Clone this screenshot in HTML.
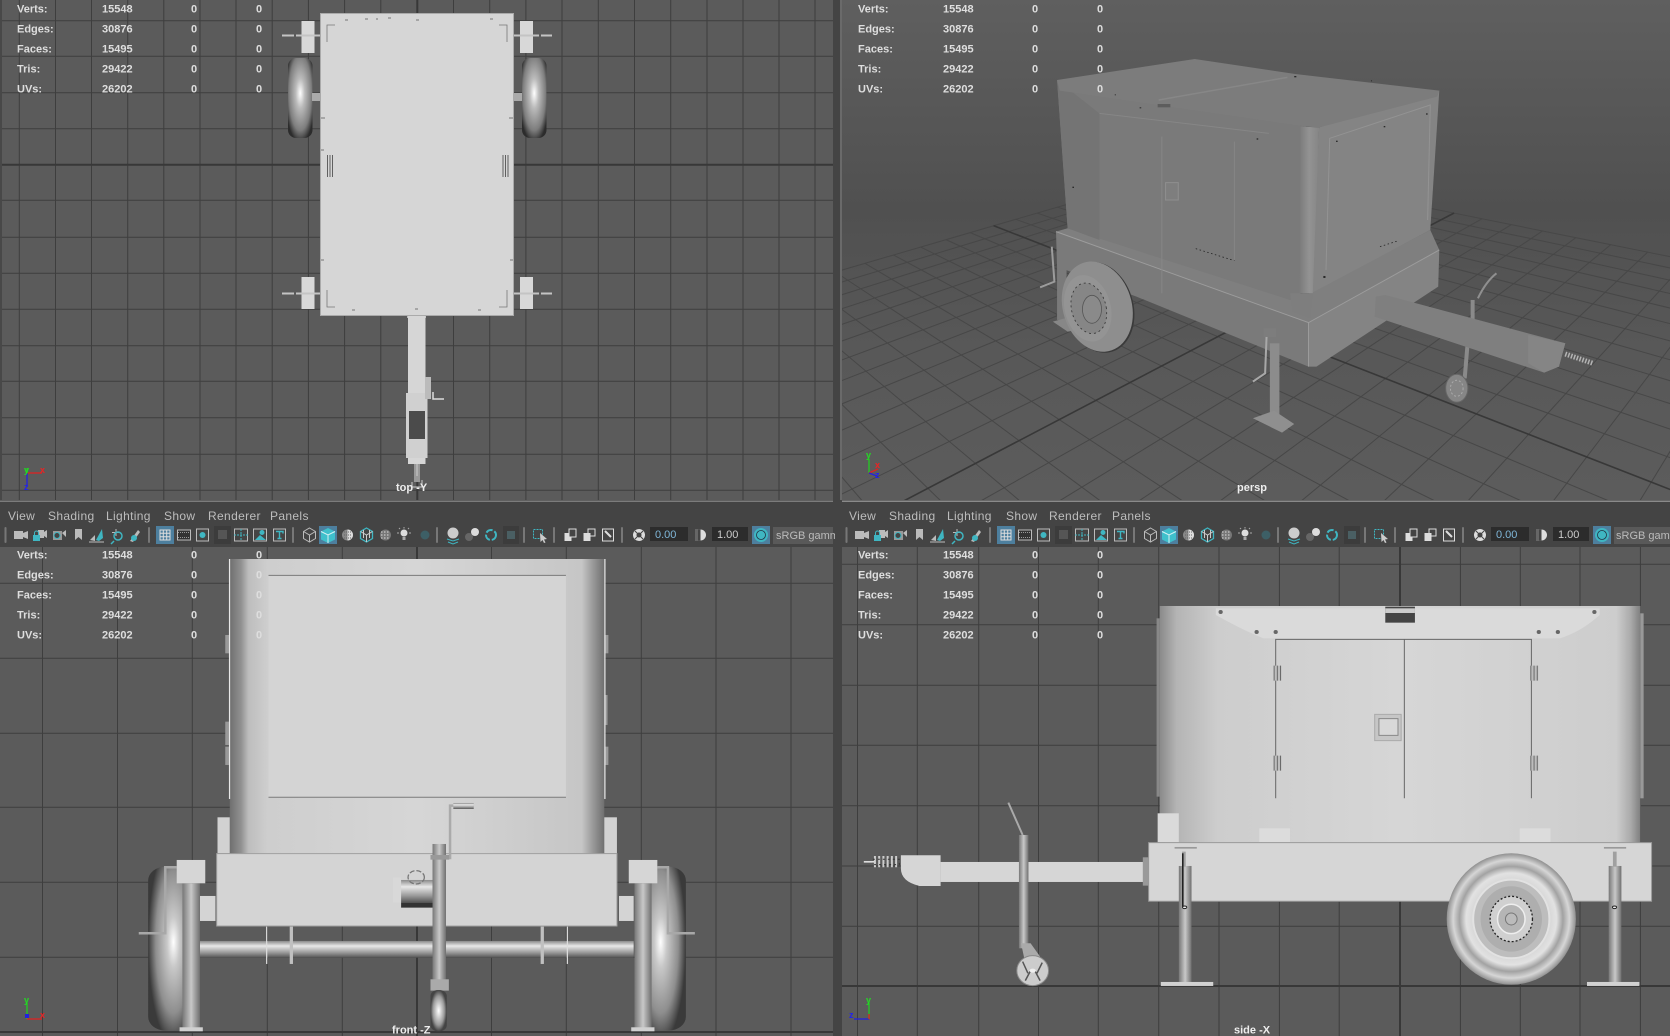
<!DOCTYPE html>
<html><head><meta charset="utf-8"><title>Viewports</title>
<style>
html,body{margin:0;padding:0;background:#444;width:1670px;height:1036px;overflow:hidden}
svg{display:block}
text{font-family:"Liberation Sans",sans-serif}
.s{font-size:11px;font-weight:bold;fill:#dedede}
.m{font-size:12px;fill:#bdbdbd;letter-spacing:.35px}
.l{font-size:11px;font-weight:bold;fill:#eee}
.n{font-size:11px}
.g{fill:none;vector-effect:non-scaling-stroke}
.g *{vector-effect:non-scaling-stroke}
line,path,rect,polygon,polyline,ellipse,circle{vector-effect:non-scaling-stroke}
</style></head><body>
<svg width="1670" height="1036" viewBox="0 0 1670 1036" xmlns="http://www.w3.org/2000/svg">
<defs>
<clipPath id="c1"><rect x="0" y="0" width="833" height="500"/></clipPath>
<clipPath id="c2"><rect x="842" y="0" width="828" height="500"/></clipPath>
<clipPath id="c3"><rect x="0" y="547" width="833" height="489"/></clipPath>
<clipPath id="c4"><rect x="842" y="547" width="828" height="489"/></clipPath>
<clipPath id="t1"><rect x="771" y="520" width="64" height="24"/></clipPath>
<clipPath id="t2"><rect x="1611" y="520" width="59" height="24"/></clipPath>
<linearGradient id="bgp" x1="0" y1="0" x2="0" y2="1"><stop offset="0" stop-color="#5f5f5f"/><stop offset=".42" stop-color="#505050"/><stop offset=".7" stop-color="#585858"/><stop offset="1" stop-color="#5c5c5c"/></linearGradient>
<linearGradient id="fb"><stop offset="0" stop-color="#6f6f6f"/><stop offset=".03" stop-color="#909090"/><stop offset=".05" stop-color="#bdbdbd"/><stop offset=".1" stop-color="#cecece"/><stop offset=".5" stop-color="#d6d6d6"/><stop offset=".94" stop-color="#c6c6c6"/><stop offset=".97" stop-color="#999"/><stop offset="1" stop-color="#6f6f6f"/></linearGradient>
<linearGradient id="sb"><stop offset="0" stop-color="#8a8a8a"/><stop offset=".035" stop-color="#b4b4b4"/><stop offset=".12" stop-color="#cdcdcd"/><stop offset=".5" stop-color="#d6d6d6"/><stop offset=".95" stop-color="#cdcdcd"/><stop offset=".98" stop-color="#aaa"/><stop offset="1" stop-color="#7f7f7f"/></linearGradient>
<radialGradient id="tw" cx=".5" cy=".44" r=".62"><stop offset="0" stop-color="#fff"/><stop offset=".3" stop-color="#bbb"/><stop offset=".75" stop-color="#7d7d7d"/><stop offset="1" stop-color="#2c2c2c"/></radialGradient>
<radialGradient id="ftl" cx=".62" cy=".46" r=".62"><stop offset="0" stop-color="#fff"/><stop offset=".25" stop-color="#c8c8c8"/><stop offset=".7" stop-color="#8e8e8e"/><stop offset="1" stop-color="#3a3a3a"/></radialGradient>
<radialGradient id="ftr" cx=".38" cy=".46" r=".62"><stop offset="0" stop-color="#fff"/><stop offset=".25" stop-color="#c8c8c8"/><stop offset=".7" stop-color="#8e8e8e"/><stop offset="1" stop-color="#3a3a3a"/></radialGradient>
<linearGradient id="post"><stop offset="0" stop-color="#777"/><stop offset=".5" stop-color="#c8c8c8"/><stop offset="1" stop-color="#6f6f6f"/></linearGradient>
<linearGradient id="axle" x1="0" y1="0" x2="0" y2="1"><stop offset="0" stop-color="#8a8a8a"/><stop offset=".3" stop-color="#e8e8e8"/><stop offset=".7" stop-color="#999"/><stop offset="1" stop-color="#555"/></linearGradient>
<linearGradient id="cnr"><stop offset="0" stop-color="#7b7b7b"/><stop offset=".5" stop-color="#939393"/><stop offset="1" stop-color="#858585"/></linearGradient>
<radialGradient id="sw"><stop offset=".58" stop-color="#d6d6d6"/><stop offset=".7" stop-color="#e2e2e2"/><stop offset=".8" stop-color="#a2a2a2"/><stop offset=".9" stop-color="#d6d6d6"/><stop offset="1" stop-color="#909090"/></radialGradient>
<radialGradient id="jw"><stop offset="0" stop-color="#fff"/><stop offset=".7" stop-color="#999"/><stop offset="1" stop-color="#444"/></radialGradient>
<g id="tb">
<g fill="#777"><rect x="4.500" y="527" width="2" height="16" rx="1"/><rect x="148" y="527" width="2" height="16" rx="1"/><rect x="292" y="527" width="2" height="16" rx="1"/><rect x="436" y="527" width="2" height="16" rx="1"/><rect x="523" y="527" width="2" height="16" rx="1"/><rect x="553" y="527" width="2" height="16" rx="1"/><rect x="621" y="527" width="2" height="16" rx="1"/></g>
<rect x="14" y="531" width="9" height="8" fill="#bbb"/><path d="M23 533l5-2v8l-5-2z" fill="#bbb"/>
<rect x="38" y="530" width="6" height="8" fill="#bbb"/><path d="M44 532l3-2v8l-3-2z" fill="#bbb"/><rect x="33" y="535" width="7" height="6" fill="#3fb6c2"/><path d="M34.500 535v-2a2 2 0 0 1 4 0v2" stroke="#3fb6c2" fill="none"/>
<rect x="53" y="531" width="9" height="9" fill="#999"/><circle cx="57" cy="535.500" r="3" fill="#444" stroke="#3fb6c2"/><path d="M62 533l4-3v7z" fill="#bbb"/>
<path d="M75 529h7v11l-3.500-3-3.500 3z" fill="#bbb"/>
<path d="M96 540l6-11 1 9-4 3z" fill="#3fb6c2"/><path d="M89 542h15" stroke="#bbb"/><path d="M90 540l5-5v6z" fill="#bbb"/>
<path d="M116 529v7M112 532.500h8" stroke="#bbb"/><circle cx="118" cy="536" r="4" fill="none" stroke="#3fb6c2" stroke-width="1.500"/><path d="M114 541l-3 3" stroke="#3fb6c2" stroke-width="1.500"/>
<path d="M130 541l8-11 2 2-7 10z" fill="#bbb"/><circle cx="134" cy="538" r="3" fill="#3fb6c2"/>
<rect x="156" y="526" width="18" height="18" fill="#4d7f9e"/><path d="M160 530h10v10h-10zM163.300 530v10M166.700 530v10M160 533.300h10M160 536.700h10" stroke="#ddd" fill="none"/>
<rect x="177.500" y="530" width="13" height="10" fill="#333" stroke="#bbb"/><path d="M178 532.500h12M178 537.500h12" stroke="#999" stroke-dasharray="1 1"/>
<rect x="196.500" y="529" width="12" height="12" fill="none" stroke="#bbb"/><circle cx="202.500" cy="535" r="3" fill="#3fb6c2"/>
<rect x="214" y="526" width="17" height="18" fill="#3c3c3c"/><rect x="218" y="530" width="9" height="9" fill="#555"/>
<rect x="234.500" y="529" width="13" height="12" fill="none" stroke="#bbb"/><path d="M241 529v12M234 535h14" stroke="#3fb6c2" stroke-dasharray="2 1"/>
<rect x="253.500" y="529" width="13" height="12" fill="none" stroke="#bbb"/><circle cx="262" cy="532.500" r="2.500" fill="#3fb6c2"/><path d="M255 540l5-5 6 5z" fill="#3fb6c2"/>
<rect x="273.500" y="529" width="12" height="12" fill="none" stroke="#bbb"/><path d="M276 531.500h7v2M279.500 531.500v7M277.500 538.500h4" stroke="#3fb6c2" fill="none" stroke-width="1.400"/>
<path d="M309.500 528l6 3.500v7l-6 3.500-6-3.500v-7zM303.500 531.500l6 3.500 6-3.500M309.500 535v7" stroke="#bbb" fill="none"/>
<rect x="319" y="526" width="18" height="18" fill="#4d7f9e"/><path d="M328 528l7 3.500v8l-7 3.500-7-3.500v-8z" fill="#3fc0cc"/><path d="M321 531.500l7 3.500 7-3.500M328 535v8" stroke="#d6f0f4" fill="none"/>
<circle cx="347.500" cy="535" r="5.500" fill="#888"/><path d="M347.500 529.500a5.500 5.500 0 0 1 0 11z" fill="#ddd"/><path d="M344 532h7M344 535h7M344 538h7" stroke="#666" stroke-dasharray="1 1"/>
<path d="M366.500 528l6 3.500v7l-6 3.500-6-3.500v-7z" fill="none" stroke="#3fb6c2" stroke-width="1.300"/><path d="M360.500 531.500l6 3.500 6-3.500M366.500 535v7M363.500 530v8M369.500 530v8" stroke="#ccc" fill="none"/>
<circle cx="385.500" cy="535" r="5.500" fill="#777"/><path d="M381 532h9M381 535h9M381 538h9" stroke="#ddd" stroke-dasharray="1.500 1.500"/>
<circle cx="404" cy="533" r="3.500" fill="#ddd"/><rect x="402.500" y="537" width="3" height="3" fill="#aaa"/><path d="M397 533h2M409 533h2M404 527v1.500M399 528l1 1M409 528l-1 1" stroke="#aaa"/>
<circle cx="425" cy="535" r="4.500" fill="#3d5f66"/>
<circle cx="453" cy="533" r="5.500" fill="#ccc"/><path d="M447 539l6 2 6-2M448 542l5 2 5-2" stroke="#3fb6c2" fill="none"/>
<circle cx="469" cy="537" r="4" fill="#666"/><circle cx="475" cy="532" r="4" fill="#ddd"/>
<circle cx="491" cy="535" r="5" fill="none" stroke="#3fb6c2" stroke-width="2" stroke-dasharray="7 2"/>
<rect x="503" y="526" width="16" height="18" fill="#3c3c3c"/><rect x="507" y="531" width="8" height="8" fill="#4a5f63"/>
<rect x="533.500" y="529.500" width="9" height="9" fill="none" stroke="#3fb6c2" stroke-dasharray="2 1"/><path d="M540 533l7 6-3 .5 1.500 3-1.500.5-1.500-3-2 2z" fill="#ccc"/>
<rect x="564.500" y="533" width="7" height="8" fill="#ddd"/><rect x="569" y="529" width="7" height="8" fill="#444" stroke="#ddd"/>
<rect x="583.500" y="533" width="7" height="8" fill="#ddd"/><rect x="588" y="529" width="7" height="7" fill="none" stroke="#ddd"/>
<rect x="602.500" y="529" width="11" height="12" fill="none" stroke="#ddd"/><path d="M605 531l6 6" stroke="#ddd" stroke-width="2"/>
<circle cx="639" cy="535" r="6" fill="#ddd"/><circle cx="639" cy="535" r="2.500" fill="#444"/><path d="M635 531l3 3M643 531l-3 3M635 539l3-3M643 539l-3-3" stroke="#444"/>
<rect x="650" y="527" width="38" height="14" fill="#2c2c2c"/>
<circle cx="700.500" cy="535" r="5.500" fill="#ddd"/><path d="M700.500 529.500a5.500 5.500 0 0 0 0 11z" fill="#444"/><rect x="695" y="529" width="3" height="12" fill="#666"/>
<rect x="712" y="527" width="36" height="14" fill="#2c2c2c"/>
<rect x="752" y="526" width="18" height="18" fill="#4d7f9e"/><circle cx="761" cy="535" r="7" fill="#3fb6c2"/><circle cx="761" cy="535" r="4.500" fill="none" stroke="#234" stroke-width=".8"/>
</g>
</defs>

<!-- base -->
<rect width="1670" height="1036" fill="#444"/>

<!-- TOP VIEW -->
<g clip-path="url(#c1)">
<rect x="0" y="0" width="833" height="500" fill="#5b5b5b"/>
<path class="g" stroke="#3e3e3e" d="M19.300 0V500M55.500 0V500M91.500 0V500M127.700 0V500M163.800 0V500M200 0V500M236 0V500M272.200 0V500M308.400 0V500M344.600 0V500M380.800 0V500M453.500 0V500M489.700 0V500M525.900 0V500M562 0V500M598.300 0V500M634.500 0V500M670.700 0V500M707 0V500M743 0V500M779 0V500M815 0V500M0 20.700H833M0 56.300H833M0 92.700H833M0 128.700H833M0 200.300H833M0 237.300H833M0 273.300H833M0 309.300H833M0 345.700H833M0 381.300H833M0 417.700H833M0 454.300H833M0 490.300H833"/>
<path class="g" stroke="#383838" stroke-width="2" d="M0 164.700H833M417.300 0V500"/>
<!-- wheels -->
<rect x="288" y="58" width="24.500" height="80" rx="8" fill="url(#tw)"/>
<rect x="522" y="58" width="24.500" height="80" rx="8" fill="url(#tw)"/>
<rect x="312" y="93" width="9" height="8" fill="#aaa"/><rect x="513" y="93" width="9" height="8" fill="#aaa"/>
<!-- tabs -->
<g fill="#d8d8d8">
<rect x="301.500" y="21" width="13" height="32"/><rect x="520" y="21" width="13" height="32"/><rect x="301.500" y="277" width="13" height="32"/><rect x="520" y="277" width="13" height="32"/>
</g>
<g fill="#c4c4c4">
<rect x="282" y="34.500" width="12" height="2"/><rect x="296" y="34.500" width="24" height="2"/><rect x="513" y="34.500" width="26" height="2"/><rect x="541" y="34.500" width="11" height="2"/><rect x="282" y="292.500" width="12" height="2"/><rect x="296" y="292.500" width="24" height="2"/><rect x="513" y="292.500" width="26" height="2"/><rect x="541" y="292.500" width="11" height="2"/>
</g>
<!-- tongue -->
<rect x="407" y="315" width="19" height="3" fill="#bbb"/>
<rect x="408" y="316" width="17.500" height="148" fill="#d6d6d6"/>
<rect x="406" y="393" width="21.500" height="65" fill="#d0d0d0"/>
<rect x="409" y="411" width="16" height="28" fill="#4b4b4b"/>
<rect x="425" y="377" width="6" height="22" fill="#bbb"/>
<path d="M433 392v7h11" stroke="#ddd" stroke-width="1.500" fill="none"/>
<rect x="414" y="464" width="6" height="18" fill="#999"/>
<path d="M412 482v5h10v-7M417 464v12" stroke="#ccc" fill="none"/>
<!-- deck -->
<rect x="320.500" y="13.500" width="193" height="302" fill="#d6d6d6" stroke="#aaa"/>
<path class="g" stroke="#777" stroke-width=".8" d="M327 42V25h8M507 42V25h-8M327 290v17h8M507 290v17h-8"/>
<path class="g" stroke="#444" stroke-width=".8" d="M327.500 155v22M330 155v22M332.500 155v22M503 155v22M505.500 155v22M508 155v22"/>
<path class="g" stroke="#555" stroke-width=".8" d="M345 20h3M365 19h3M376 19h2M388 18h3M416 20h3M490 19h3M352 310h3M415 309h3M478 310h3M321 118h4M509 118h4M321 150h3M321 260h3M510 260h3"/>
<!-- text label -->
<text class="l" x="396" y="491">top -Y</text>
<!-- gizmo -->
<path d="M27 473h15" stroke="#d22" stroke-width="1.300"/><path d="M27 473v-5" stroke="#2c2" stroke-width="1.300"/><path d="M27 473v14" stroke="#22d" stroke-width="1.300"/>
<text x="24" y="473" font-size="9" font-weight="bold" fill="#2d2">y</text><text x="40" y="473" font-size="9" font-weight="bold" fill="#e22">x</text><text x="24" y="490" font-size="9" font-weight="bold" fill="#22e">z</text>
</g>

<!-- PERSP VIEW -->
<g clip-path="url(#c2)">
<rect x="842" y="0" width="828" height="500" fill="url(#bgp)"/>
<g transform="translate(840,0) scale(.5294,.3333)">
<path class="g" stroke="#474747" d="M0 1425L46 1510M0 1208L195 1510M0 1048L345 1510M0 924L498 1510M-9 816L654 1510M47 790L811 1510M101 765L971 1510M152 741L1133 1510M200 719L1297 1510M246 698L1463 1510M332 658L1580 1380M372 639L1580 1294M410 621L1580 1217M447 604L1580 1148M482 588L1580 1085M516 572L1580 1028M549 557L1580 976M580 543L1580 929M610 529L1580 885M639 515L1580 845M667 502L1580 808M694 490L1580 774"/>
<path class="g" stroke="#474747" d="M1580 1323L1508 1510M1580 1017L1344 1510M1580 817L1182 1510M1526 756L1023 1510M1456 734L866 1510M1390 713L712 1510M1327 693L558 1510M1268 674L407 1510M1213 656L258 1510M1110 623L0 1485M1063 608L0 1383M1018 594L0 1293M975 580L0 1214M934 567L0 1144M895 554L0 1082M858 542L0 1025M822 531L0 975M788 520L0 928M755 510L0 886M724 500L0 848M694 490L0 812"/>
<path class="g" stroke="#383838" stroke-width="1.600" d="M290 677L1580 1476M1160 639L112 1510"/>
<!-- tongue back -->
<path d="M1195 900v70" stroke="#8a8a8a" stroke-width="4"/>
<path d="M1205 895q15-50 35-75" stroke="#8f8f8f" stroke-width="2" fill="none"/>
<!-- base -->
<polygon points="408,695 885,965 885,1100 560,890 410,800" fill="#7a7a7a"/>
<polygon points="885,968 1132,750 1130,860 900,1100 885,1100" fill="#848484"/>
<polygon points="408,695 430,685 880,885 1115,690 1132,750 885,968" fill="#7f7f7f"/>
<path d="M408 695L885 968L1132 750" stroke="#9c9c9c" fill="none"/><path d="M885 968V1100" stroke="#9c9c9c"/>
<!-- box -->
<polygon points="410,240 880,380 870,880 850,900 430,685" fill="#7a7a7a"/>
<polygon points="410,240 430,685 490,720 490,340" fill="#747474"/>
<polygon points="905,382 1132,272 1115,690 890,880" fill="#848484"/>
<polygon points="870,380 905,382 893,880 868,880" fill="url(#cnr)"/>
<polygon points="850,880 893,880 888,955 855,935" fill="#7e7e7e"/>
<polygon points="410,240 670,177 860,222 1132,272 1128,290 905,382 880,380 415,272" fill="#7c7c7c"/>
<path d="M602 300L845 232" stroke="#878787" stroke-width="1.500"/>
<path d="M918 810L925 415L1115 315L1110 660" stroke="#939393" fill="none"/>
<path d="M608 410V880M745 425V780M490 340L810 400" stroke="#868686" fill="none"/>
<rect x="615" y="548" width="24" height="52" fill="#7e7e7e" stroke="#8f8f8f"/>
<path d="M672 746L745 782M1020 740L1055 722" stroke="#222" stroke-width=".8" stroke-dasharray="1.500 2.500"/>
<rect x="600" y="312" width="24" height="10" fill="#5d5d5d"/>
<g fill="#2a2a2a"><rect x="858" y="228" width="4" height="4"/><rect x="566" y="322" width="3" height="3"/><rect x="787" y="415" width="3" height="4"/><rect x="937" y="422" width="3" height="4"/><rect x="1027" y="378" width="3" height="4"/><rect x="1107" y="340" width="3" height="4"/><rect x="439" y="560" width="3" height="4"/><rect x="913" y="828" width="4" height="6"/><rect x="1003" y="241" width="2" height="3"/><rect x="519" y="283" width="2" height="3"/></g>
<!-- left jack -->
<rect x="410" y="770" width="18" height="190" fill="#7a7a7a"/>
<path d="M400 740L405 845L378 862" stroke="#9c9c9c" stroke-width="2" fill="none"/>
<polygon points="402,965 425,955 455,990 430,995" fill="#878787"/>
<!-- wheel -->
<ellipse cx="489" cy="922" rx="66" ry="137" transform="rotate(-6 489 922)" fill="#3a3a3a"/>
<ellipse cx="486" cy="920" rx="66" ry="136" transform="rotate(-6 486 920)" fill="#8e8e8e"/>
<ellipse cx="468" cy="925" rx="44" ry="100" transform="rotate(-6 468 925)" fill="#949494"/>
<ellipse cx="470" cy="925" rx="33" ry="76" transform="rotate(-6 470 925)" fill="#868686" stroke="#333" stroke-width=".8" stroke-dasharray="2 3"/>
<ellipse cx="476" cy="928" rx="18" ry="42" fill="#8a8a8a" stroke="#555" stroke-width=".8"/>
<!-- front jack -->
<rect x="812" y="1030" width="18" height="220" fill="#8c8c8c"/>
<path d="M806 1000L803 1120L780 1145" stroke="#a8a8a8" stroke-width="2" fill="none"/>
<rect x="800" y="985" width="24" height="26" fill="#7d7d7d"/>
<polygon points="780,1255 820,1232 858,1272 835,1298" fill="#8f8f8f"/>
<!-- tongue -->
<path d="M1185 1040L1180 1135" stroke="#8a8a8a" stroke-width="4"/>
<ellipse cx="1165" cy="1165" rx="21" ry="42" fill="#868686" stroke="#666"/><ellipse cx="1165" cy="1165" rx="12" ry="24" fill="none" stroke="#aaa" stroke-dasharray="2 2"/>
<path d="M1370 1062L1422 1090" stroke="#b4b4b4" stroke-width="5" stroke-dasharray="1.500 1.500"/>
<polygon points="1012,890 1030,885 1370,1030 1358,1100 1330,1118 1010,950" fill="#7f7f7f"/>
<polygon points="1300,1005 1370,1030 1358,1100 1330,1118 1300,1090" fill="#858585"/>
</g>
<text class="l" x="1237" y="491" font-weight="normal">persp</text>
<!-- gizmo -->
<path d="M869 473v-14" stroke="#2c2" stroke-width="1.300"/><path d="M869 473l9-4" stroke="#d22" stroke-width="1.300"/><path d="M869 473l8 3" stroke="#22d" stroke-width="1.300"/>
<text x="866" y="458" font-size="9" font-weight="bold" fill="#2d2">y</text><text x="875" y="468" font-size="9" font-weight="bold" fill="#e22">x</text><text x="875" y="478" font-size="9" font-weight="bold" fill="#22e">z</text>
</g>

<!-- FRONT VIEW -->
<g clip-path="url(#c3)">
<rect x="0" y="547" width="833" height="489" fill="#5b5b5b"/>
<path class="g" stroke="#3e3e3e" d="M42.500 547V1036M117.500 547V1036M192.300 547V1036M267.300 547V1036M342.300 547V1036M491.500 547V1036M566.300 547V1036M641.300 547V1036M716 547V1036M791 547V1036M0 583.300H833M0 658.300H833M0 733.300H833M0 807.300H833M0 882.300H833M0 957.300H833"/>
<path class="g" stroke="#383838" stroke-width="2" d="M417 547V1036M0 1032H833"/>
<g transform="translate(100,540) scale(.408,.3333)">
<!-- tires -->
<rect x="118" y="980" width="100" height="492" rx="42" fill="url(#ftl)"/>
<rect x="1336" y="980" width="100" height="492" rx="42" fill="url(#ftr)"/>
<!-- lugs -->
<g fill="#999"><rect x="307" y="285" width="12" height="55"/><rect x="1236" y="285" width="10" height="55"/><rect x="307" y="620" width="12" height="55"/><rect x="1236" y="620" width="10" height="55"/><rect x="307" y="545" width="10" height="70"/><rect x="1236" y="465" width="8" height="90"/></g>
<!-- axle -->
<rect x="245" y="1203" width="1063" height="50" fill="url(#axle)"/>
<rect x="465" y="1160" width="8" height="112" fill="#c0c0c0"/><rect x="1080" y="1160" width="8" height="112" fill="#c0c0c0"/>
<rect x="407" y="1160" width="3" height="112" fill="#ddd"/><rect x="1144" y="1160" width="3" height="112" fill="#ddd"/>
<!-- body -->
<rect x="318" y="57" width="918" height="884" fill="url(#fb)"/>
<rect x="316" y="57" width="3" height="720" fill="#e8e8e8"/><rect x="1236" y="57" width="3" height="720" fill="#e8e8e8"/>
<rect x="413" y="106" width="729" height="666" fill="#d4d4d4"/>
<path d="M413 106H1142M413 772H1142" stroke="#7a7a7a" fill="none"/>
<!-- uprights -->
<rect x="288" y="832" width="30" height="108" fill="#d2d2d2"/><rect x="1236" y="832" width="31" height="108" fill="#d2d2d2"/>
<!-- base -->
<rect x="286" y="941" width="981" height="217" fill="#d4d4d4" stroke="#a0a0a0"/>
<rect x="245" y="1068" width="38" height="75" fill="#d4d4d4"/><rect x="1272" y="1068" width="36" height="75" fill="#d4d4d4"/>
<!-- crank handles -->
<path d="M188 982H160V1180H95" stroke="#a8a8a8" stroke-width="2.500" fill="none"/><path d="M1366 982H1392V1180H1458" stroke="#a8a8a8" stroke-width="2.500" fill="none"/>
<!-- jack posts -->
<rect x="202" y="1030" width="43" height="435" fill="url(#post)"/><rect x="1310" y="1030" width="42" height="435" fill="url(#post)"/>
<rect x="195" y="1462" width="57" height="12" fill="#d0d0d0"/><rect x="1302" y="1462" width="57" height="12" fill="#d0d0d0"/>
<rect x="188" y="960" width="70" height="70" fill="#d6d6d6"/><rect x="1296" y="960" width="70" height="70" fill="#d6d6d6"/>
<!-- center hardware -->
<path d="M858 958V797H916" stroke="#aaa" stroke-width="2.500" fill="none"/><rect x="866" y="789" width="50" height="18" fill="url(#axle)"/>
<rect x="718" y="1012" width="20" height="76" fill="#d8d8d8"/>
<rect x="738" y="1020" width="80" height="68" fill="url(#axle)"/>
<rect x="815" y="1012" width="23" height="76" fill="#d8d8d8"/>
<rect x="738" y="1088" width="80" height="15" fill="#333"/>
<ellipse cx="775" cy="1012" rx="20" ry="20" fill="none" stroke="#777" stroke-width="1.300" stroke-dasharray="5 2"/>
<rect x="815" y="912" width="33" height="408" fill="url(#post)"/>
<rect x="810" y="945" width="46" height="14" fill="#999"/>
<rect x="810" y="1318" width="45" height="34" fill="#aaa"/>
<rect x="810" y="1350" width="40" height="124" rx="18" fill="url(#jw)"/>
</g>
<text class="l" x="392" y="1033.500">front -Z</text>
<path d="M27 1019v-16" stroke="#2c2" stroke-width="1.300"/><path d="M27 1019h15" stroke="#d22" stroke-width="1.300"/><rect x="25" y="1014" width="4" height="4" fill="#22d"/>
<text x="24" y="1003" font-size="9" font-weight="bold" fill="#2d2">y</text><text x="40" y="1018" font-size="9" font-weight="bold" fill="#e22">x</text>
</g>

<!-- SIDE VIEW -->
<g clip-path="url(#c4)">
<rect x="842" y="547" width="828" height="489" fill="#5b5b5b"/>
<path class="g" stroke="#3e3e3e" d="M857.500 547V1036M917.300 547V1036M978.700 547V1036M1038.500 547V1036M1098.300 547V1036M1158.700 547V1036M1219 547V1036M1279.400 547V1036M1339.200 547V1036M1460.400 547V1036M1520.300 547V1036M1580 547V1036M1640.400 547V1036M842 564.300H1670M842 624.700H1670M842 685.300H1670M842 745.300H1670M842 805.700H1670M842 866H1670M842 926.300H1670"/>
<path class="g" stroke="#383838" stroke-width="2" d="M1400 547V1036M842 986H1670"/>
<g transform="translate(840,560) scale(.5294,.3333)">
<!-- body -->
<rect x="604" y="138" width="908" height="712" fill="url(#sb)"/>
<rect x="598" y="175" width="6" height="535" fill="#888"/><rect x="1512" y="160" width="6" height="555" fill="#999"/>
<path d="M710 165Q760 210 800 235H1360Q1400 215 1435 165V145H710z" fill="#dadada"/>
<rect x="1030" y="140" width="56" height="48" fill="#444"/><rect x="1030" y="145" width="56" height="14" fill="#ccc"/>
<g fill="#666"><ellipse cx="719" cy="156" rx="4" ry="6"/><ellipse cx="1425" cy="156" rx="4" ry="6"/><ellipse cx="787" cy="216" rx="4" ry="6"/><ellipse cx="823" cy="216" rx="4" ry="6"/><ellipse cx="1320" cy="216" rx="4" ry="6"/><ellipse cx="1356" cy="216" rx="4" ry="6"/></g>
<path d="M823 715V238H1306V715M1066 238V715" stroke="#666" fill="none"/>
<g fill="#bdbdbd"><rect x="819" y="317" width="15" height="45"/><rect x="1304" y="317" width="15" height="45"/><rect x="819" y="587" width="15" height="45"/><rect x="1304" y="587" width="15" height="45"/></g>
<path d="M820 317v45M826 317v45M832 317v45M1305 317v45M1311 317v45M1317 317v45M820 587v45M826 587v45M832 587v45M1305 587v45M1311 587v45M1317 587v45" stroke="#555" stroke-width=".8"/>
<rect x="1010" y="463" width="50" height="79" fill="#c6c6c6" stroke="#aaa"/>
<path d="M1018 476H1054V526H1018z" fill="#d8d8d8" stroke="#888"/>
<rect x="792" y="805" width="58" height="41" fill="#dcdcdc"/><rect x="1284" y="805" width="58" height="41" fill="#dcdcdc"/>
<rect x="600" y="760" width="40" height="87" fill="#dadada"/>
<!-- base -->
<rect x="583" y="848" width="950" height="176" fill="#d6d6d6" stroke="#9a9a9a"/>
<!-- tongue -->
<rect x="190" y="906" width="385" height="60" fill="#d6d6d6"/>
<path d="M115 886H190V978H150Q115 965 115 925z" fill="#d6d6d6"/>
<rect x="572" y="892" width="11" height="85" fill="#999"/>
<path d="M66 888V922M74 888V922M82 888V922M90 888V922M98 888V922M106 888V922" stroke="#ccc" stroke-width="2"/>
<rect x="62" y="898" width="50" height="16" fill="none" stroke="#333" stroke-dasharray="2 3"/>
<rect x="45" y="903" width="20" height="5" fill="#ddd"/>
<!-- jockey -->
<path d="M318 728L345 825" stroke="#aaa" stroke-width="2"/>
<rect x="338" y="825" width="18" height="340" fill="url(#post)"/>
<polygon points="342,1150 360,1150 378,1190 350,1210" fill="#aaa"/>
<ellipse cx="364" cy="1232" rx="30" ry="45" fill="#ccc" stroke="#888"/>
<g stroke="#555" stroke-width="1.500"><path d="M345 1205L355 1240M382 1208L372 1240M350 1262L360 1232M378 1262L368 1232"/></g>
<circle cx="364" cy="1232" r="6" fill="#eee"/>
<!-- jacks -->
<rect x="640" y="918" width="24" height="350" fill="url(#post)"/><rect x="1452" y="918" width="24" height="350" fill="url(#post)"/>
<rect x="646" y="875" width="7" height="45" fill="#a0a0a0"/><rect x="1460" y="875" width="7" height="45" fill="#a0a0a0"/>
<rect x="646" y="880" width="3" height="160" fill="#222"/><circle cx="651" cy="1042" r="4" fill="#eee" stroke="#222"/><circle cx="1463" cy="1042" r="4" fill="#eee" stroke="#222"/>
<rect x="632" y="861" width="42" height="5" fill="#999"/><rect x="1443" y="861" width="42" height="5" fill="#999"/>
<rect x="606" y="1266" width="99" height="12" fill="#d2d2d2"/><rect x="1411" y="1266" width="99" height="12" fill="#d2d2d2"/>
<!-- wheel -->
<ellipse cx="1268" cy="1077" rx="122" ry="197" fill="url(#sw)"/>
<ellipse cx="1268" cy="1077" rx="72" ry="118" fill="#bdbdbd" stroke="#e2e2e2" stroke-width="2"/>
<ellipse cx="1268" cy="1077" rx="58" ry="98" fill="#aeaeae"/>
<ellipse cx="1268" cy="1077" rx="40" ry="68" fill="#d0d0d0" stroke="#222" stroke-width="1.300" stroke-dasharray="2 2"/>
<ellipse cx="1268" cy="1077" rx="26" ry="44" fill="#b5b5b5" stroke="#eee" stroke-width="1.500"/>
<ellipse cx="1268" cy="1077" rx="11" ry="18" fill="#bbb" stroke="#777"/>
</g>
<text class="l" x="1234" y="1033.500">side -X</text>
<path d="M869 1019v-16" stroke="#2c2" stroke-width="1.300"/><path d="M869 1019h-15" stroke="#22d" stroke-width="1.300"/><path d="M869 1019v-5" stroke="#d22" stroke-width="1.300"/>
<text x="866" y="1003" font-size="9" font-weight="bold" fill="#2d2">y</text><text x="849" y="1018" font-size="9" font-weight="bold" fill="#22e">z</text>
</g>

<!-- separators and borders -->
<rect x="833" y="0" width="9" height="1036" fill="#444"/>
<rect x="840" y="0" width="2" height="500" fill="#6a6a6a"/>
<rect x="0" y="0" width="2" height="500" fill="#484848"/>
<rect x="0" y="500" width="1670" height="47" fill="#444"/>
<rect x="842" y="500.500" width="828" height="1.500" fill="#8a8a8a"/>
<rect x="0" y="500.500" width="833" height="1.500" fill="#7c7c7c"/>

<!-- MENUS -->
<text class="m" x="8" y="520">View</text><text class="m" x="48" y="520">Shading</text><text class="m" x="106" y="520">Lighting</text><text class="m" x="164" y="520">Show</text><text class="m" x="208" y="520">Renderer</text><text class="m" x="270" y="520">Panels</text>
<text class="m" x="849" y="520">View</text><text class="m" x="889" y="520">Shading</text><text class="m" x="947" y="520">Lighting</text><text class="m" x="1006" y="520">Show</text><text class="m" x="1049" y="520">Renderer</text><text class="m" x="1112" y="520">Panels</text>
<use href="#tb" x="0"/>
<use href="#tb" x="841"/>
<rect x="773" y="527" width="60" height="17" fill="#595959"/>
<rect x="1614" y="527" width="56" height="17" fill="#595959"/>
<text class="n" x="655" y="538" fill="#7fb6d8">0.00</text><text class="n" x="717" y="538" fill="#ccc">1.00</text>
<text class="n" x="1496" y="538" fill="#7fb6d8">0.00</text><text class="n" x="1558" y="538" fill="#ccc">1.00</text>
<g clip-path="url(#t1)"><text class="n" x="776" y="539" fill="#bbb">sRGB gamma</text></g>
<g clip-path="url(#t2)"><text class="n" x="1616" y="539" fill="#bbb">sRGB gamma</text></g>

<!-- STATS top-left -->
<text class="s" x="17" y="12.500">Verts:</text><text class="s" x="102" y="12.500">15548</text><text class="s" x="191" y="12.500">0</text><text class="s" x="256" y="12.500">0</text>
<text class="s" x="17" y="32.500">Edges:</text><text class="s" x="102" y="32.500">30876</text><text class="s" x="191" y="32.500">0</text><text class="s" x="256" y="32.500">0</text>
<text class="s" x="17" y="52.500">Faces:</text><text class="s" x="102" y="52.500">15495</text><text class="s" x="191" y="52.500">0</text><text class="s" x="256" y="52.500">0</text>
<text class="s" x="17" y="72.500">Tris:</text><text class="s" x="102" y="72.500">29422</text><text class="s" x="191" y="72.500">0</text><text class="s" x="256" y="72.500">0</text>
<text class="s" x="17" y="92.500">UVs:</text><text class="s" x="102" y="92.500">26202</text><text class="s" x="191" y="92.500">0</text><text class="s" x="256" y="92.500">0</text>
<!-- STATS top-right -->
<text class="s" x="858" y="12.500">Verts:</text><text class="s" x="943" y="12.500">15548</text><text class="s" x="1032" y="12.500">0</text><text class="s" x="1097" y="12.500">0</text>
<text class="s" x="858" y="32.500">Edges:</text><text class="s" x="943" y="32.500">30876</text><text class="s" x="1032" y="32.500">0</text><text class="s" x="1097" y="32.500">0</text>
<text class="s" x="858" y="52.500">Faces:</text><text class="s" x="943" y="52.500">15495</text><text class="s" x="1032" y="52.500">0</text><text class="s" x="1097" y="52.500">0</text>
<text class="s" x="858" y="72.500">Tris:</text><text class="s" x="943" y="72.500">29422</text><text class="s" x="1032" y="72.500">0</text><text class="s" x="1097" y="72.500">0</text>
<text class="s" x="858" y="92.500">UVs:</text><text class="s" x="943" y="92.500">26202</text><text class="s" x="1032" y="92.500">0</text><text class="s" x="1097" y="92.500">0</text>
<!-- STATS bottom-left -->
<text class="s" x="17" y="558.500">Verts:</text><text class="s" x="102" y="558.500">15548</text><text class="s" x="191" y="558.500">0</text><text class="s" x="256" y="558.500">0</text>
<text class="s" x="17" y="578.500">Edges:</text><text class="s" x="102" y="578.500">30876</text><text class="s" x="191" y="578.500">0</text><text class="s" x="256" y="578.500">0</text>
<text class="s" x="17" y="598.500">Faces:</text><text class="s" x="102" y="598.500">15495</text><text class="s" x="191" y="598.500">0</text><text class="s" x="256" y="598.500">0</text>
<text class="s" x="17" y="618.500">Tris:</text><text class="s" x="102" y="618.500">29422</text><text class="s" x="191" y="618.500">0</text><text class="s" x="256" y="618.500">0</text>
<text class="s" x="17" y="638.500">UVs:</text><text class="s" x="102" y="638.500">26202</text><text class="s" x="191" y="638.500">0</text><text class="s" x="256" y="638.500">0</text>
<!-- STATS bottom-right -->
<text class="s" x="858" y="558.500">Verts:</text><text class="s" x="943" y="558.500">15548</text><text class="s" x="1032" y="558.500">0</text><text class="s" x="1097" y="558.500">0</text>
<text class="s" x="858" y="578.500">Edges:</text><text class="s" x="943" y="578.500">30876</text><text class="s" x="1032" y="578.500">0</text><text class="s" x="1097" y="578.500">0</text>
<text class="s" x="858" y="598.500">Faces:</text><text class="s" x="943" y="598.500">15495</text><text class="s" x="1032" y="598.500">0</text><text class="s" x="1097" y="598.500">0</text>
<text class="s" x="858" y="618.500">Tris:</text><text class="s" x="943" y="618.500">29422</text><text class="s" x="1032" y="618.500">0</text><text class="s" x="1097" y="618.500">0</text>
<text class="s" x="858" y="638.500">UVs:</text><text class="s" x="943" y="638.500">26202</text><text class="s" x="1032" y="638.500">0</text><text class="s" x="1097" y="638.500">0</text>
</svg>
</body></html>
